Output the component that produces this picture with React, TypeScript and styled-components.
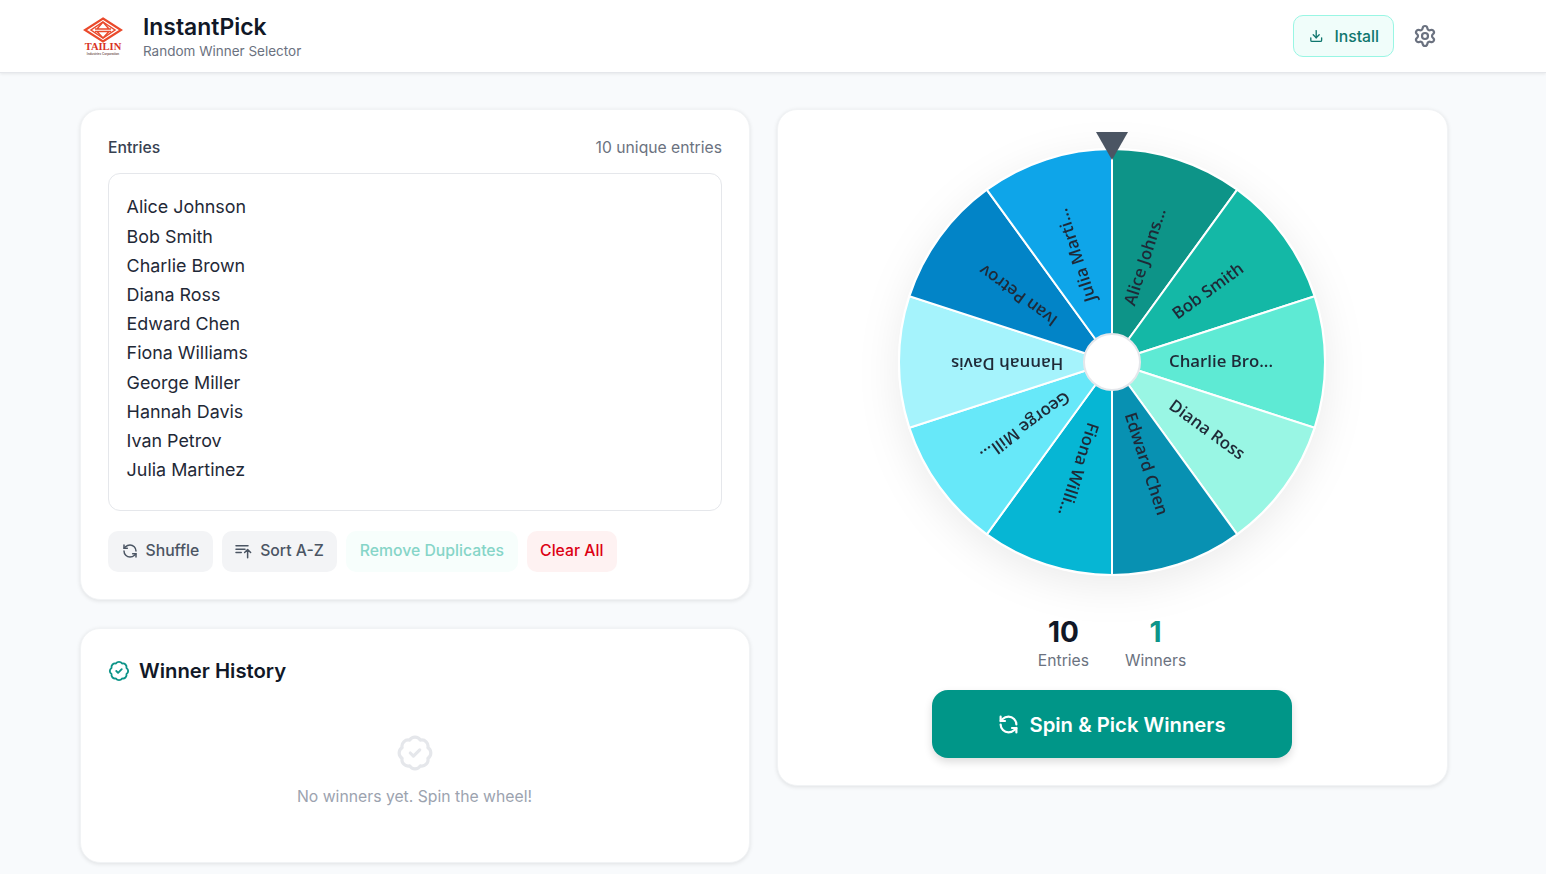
import React from "react";
import styled, { createGlobalStyle } from "styled-components";
import { BadgeCheck, Download, RefreshCcw, Settings } from "lucide-react";

const GlobalStyle = createGlobalStyle`
  * {
    box-sizing: border-box;
  }
  html, body {
    margin: 0;
    height: 874px;
    overflow: hidden;
  }
  body {
    background-color: #f8fafc;
    font-family: Inter, "Liberation Sans", sans-serif;
    color: #111827;
  }
`;

const Header = styled.header`
  height: 73px;
  background-color: #fff;
  border-bottom: 1px solid #e5e7eb;
  box-shadow: 0 1px 3px rgba(0, 0, 0, 0.08);
  display: flex;
  align-items: center;
  justify-content: space-between;
  padding: 0 109px 0 83px;
`;

const Brand = styled.div`
  display: flex;
  align-items: center;
  gap: 20px;
`;

const BrandText = styled.div`
  display: flex;
  flex-direction: column;
  gap: 1px;
`;

const Title = styled.h1`
  margin: 0;
  font-size: 22.9px;
  line-height: 28px;
  font-weight: 600;
  color: #111827;
`;

const Subtitle = styled.p`
  margin: 0;
  font-size: 13.5px;
  line-height: 18px;
  color: #6b7280;
`;

const HeaderActions = styled.div`
  display: flex;
  align-items: center;
  gap: 19px;
`;

const InstallButton = styled.button`
  display: flex;
  align-items: center;
  gap: 11px;
  height: 42px;
  width: 101px;
  padding: 0 14px 0 15px;
  background-color: #f0fdfa;
  border: 1px solid #99f6e4;
  border-radius: 10px;
  color: #0f766e;
  font-family: inherit;
  font-size: 15.75px;
  font-weight: 500;
`;

const IconButton = styled.button`
  display: flex;
  padding: 0;
  border: none;
  background: none;
  color: #6b7280;
`;

const Page = styled.main`
  display: grid;
  grid-template-columns: 670px 671px;
  gap: 27px;
  align-items: start;
  padding: 36px 0 0 80px;
`;

const Column = styled.div`
  display: flex;
  flex-direction: column;
  gap: 28px;
`;

const Card = styled.section`
  background-color: #fff;
  border: 1px solid #f1f3f5;
  border-radius: 20px;
  box-shadow: 0 1px 4px rgba(0, 0, 0, 0.1);
`;

const EntriesCard = styled(Card)`
  height: 491px;
  padding: 27px;
`;

const EntriesHead = styled.div`
  display: flex;
  justify-content: space-between;
  align-items: center;
  height: 20px;
  margin-bottom: 16px;
`;

const EntriesLabel = styled.span`
  font-size: 15.75px;
  font-weight: 500;
  color: #374151;
`;

const EntriesCount = styled.span`
  font-size: 15.7px;
  color: #6b7280;
`;

const EntriesBox = styled.textarea`
  display: block;
  width: 100%;
  height: 338px;
  padding: 18.400px 17.600px 18px;
  border: 1px solid #e5e7eb;
  border-radius: 12px;
  background-color: #fff;
  color: #1f2937;
  font-family: inherit;
  font-size: 17.9px;
  line-height: 29.2px;
  resize: none;
  outline: none;
  overflow: hidden;
`;

const ButtonRow = styled.div`
  display: flex;
  gap: 9px;
  margin-top: 20px;
`;

const ToolButton = styled.button<{ $tone: "gray" | "teal" | "red" }>`
  display: flex;
  align-items: center;
  gap: 8px;
  height: 41px;
  padding: 0 13.5px 2px;
  border: none;
  border-radius: 10px;
  font-family: inherit;
  font-size: 15.75px;
  font-weight: 500;
  background-color: ${(p) =>
    p.$tone === "gray" ? "#f3f4f6" : p.$tone === "teal" ? "#f7fefc" : "#fef2f2"};
  color: ${(p) =>
    p.$tone === "gray" ? "#4b5563" : p.$tone === "teal" ? "#86d5c8" : "#dc0014"};
`;

const HistoryCard = styled(Card)`
  height: 235px;
  padding: 28px 28px 28px 27px;
`;

const HistoryHead = styled.div`
  display: flex;
  align-items: center;
  gap: 9px;
  color: #0d9488;
`;

const HistoryTitle = styled.h2`
  margin: 0;
  font-size: 20.3px;
  line-height: 28px;
  font-weight: 600;
  color: #111827;
`;

const EmptyState = styled.div`
  display: flex;
  flex-direction: column;
  align-items: center;
  gap: 13px;
  margin-top: 49px;
  color: #e5e7eb;
`;

const EmptyText = styled.p`
  margin: 0;
  font-size: 15.75px;
  line-height: 24px;
  color: #9ca3af;
`;

const WheelCard = styled(Card)`
  height: 677px;
  padding: 37px 1px 0 0;
  display: flex;
  flex-direction: column;
  align-items: center;
`;

const WheelWrap = styled.div`
  position: relative;
  width: 430px;
  height: 430px;
`;

const WheelSvg = styled.svg`
  display: block;
  overflow: visible;
  filter: drop-shadow(0 10px 20px rgba(0, 0, 0, 0.08));
`;

const WheelLabel = styled.text`
  font-family: "Open Sans", "Noto Sans", sans-serif;
  font-size: 16.8px;
  font-weight: 600;
  fill: #1f2937;
`;

const Pointer = styled.div`
  position: absolute;
  top: -15px;
  left: 199px;
  width: 32px;
  height: 28px;
  background-color: #4b5563;
  clip-path: polygon(0 0, 100% 0, 50% 100%);
`;

const Stats = styled.div`
  display: flex;
  gap: 36px;
  margin-top: 38px;
`;

const Stat = styled.div`
  display: flex;
  flex-direction: column;
  align-items: center;
  gap: 1px;
`;

const StatValue = styled.span<{ $accent?: boolean }>`
  font-size: 28px;
  line-height: 34px;
  font-weight: 700;
  color: ${(p) => (p.$accent ? "#0d9488" : "#111827")};
`;

const StatLabel = styled.span`
  font-size: 15.7px;
  line-height: 22px;
  color: #6b7280;
`;

const SpinButton = styled.button`
  display: flex;
  align-items: center;
  justify-content: center;
  gap: 10px;
  width: 360px;
  height: 68px;
  margin-top: 18px;
  border: none;
  border-radius: 16px;
  background-color: #009688;
  color: #fff;
  font-family: inherit;
  font-size: 20.3px;
  font-weight: 600;
  box-shadow: 0 4px 8px rgba(0, 0, 0, 0.14);
`;

const entries = [
  "Alice Johnson",
  "Bob Smith",
  "Charlie Brown",
  "Diana Ross",
  "Edward Chen",
  "Fiona Williams",
  "George Miller",
  "Hannah Davis",
  "Ivan Petrov",
  "Julia Martinez",
];

const segments = [
  { label: "Alice Johns...", color: "#0d9488" },
  { label: "Bob Smith", color: "#14b8a6" },
  { label: "Charlie Bro...", color: "#5eead4" },
  { label: "Diana Ross", color: "#99f6e4" },
  { label: "Edward Chen", color: "#0891b2" },
  { label: "Fiona Willi...", color: "#06b6d4" },
  { label: "George Mill...", color: "#67e8f9" },
  { label: "Hannah Davis", color: "#a5f3fc" },
  { label: "Ivan Petrov", color: "#0284c7" },
  { label: "Julia Marti...", color: "#0ea5e9" },
];

const RADIUS = 213;

function pointAt(deg: number) {
  const rad = (deg * Math.PI) / 180;
  return `${(RADIUS * Math.cos(rad)).toFixed(2)} ${(RADIUS * Math.sin(rad)).toFixed(2)}`;
}

function Wheel() {
  return (
    <WheelSvg width="430" height="430" viewBox="-215 -215 430 430">
      <circle r={RADIUS + 1} fill="#fff" />
      {segments.map((seg, i) => {
        const start = -90 + i * 36;
        return (
          <g key={seg.label}>
            <path
              d={`M0 0 L${pointAt(start)} A${RADIUS} ${RADIUS} 0 0 1 ${pointAt(start + 36)} Z`}
              fill={seg.color}
              stroke="#fff"
              strokeWidth="2"
            />
            <WheelLabel
              x="161"
              y="-2"
              textAnchor="end"
              dominantBaseline="central"
              transform={`rotate(${start + 18})`}
            >
              {seg.label}
            </WheelLabel>
          </g>
        );
      })}
      <circle r="28" fill="#fff" stroke="#e5e7eb" strokeWidth="2" />
    </WheelSvg>
  );
}

function SortIcon() {
  return (
    <svg width="17" height="18" viewBox="0 0 22 24" fill="none" stroke="currentColor" strokeWidth="2" strokeLinecap="round" strokeLinejoin="round">
      <path d="M1 5h16M1 9.500h12M1 14h7" />
      <path d="M16.500 21V10M12.500 14l4-4 4 4" />
    </svg>
  );
}

function Logo() {
  return (
    <svg width="40" height="40" viewBox="0 0 40 40" fill="none">
      <g stroke="#ea4a2c">
        <path d="M20 2.500 L38 14 L20 25.500 L2 14 Z" strokeWidth="2.200" />
        <path d="M20 6 L32 14 L20 22 L8 14 Z" strokeWidth="1.500" />
        <path d="M12 13 H28 M12 15.500 H28 M20 6 L14 13 M20 6 L26 13 M20 22 L14 15.500 M20 22 L26 15.500" strokeWidth="1.400" />
      </g>
      <text x="20" y="34" textAnchor="middle" fontFamily="'Liberation Serif', serif" fontWeight="700" fontSize="10.500" fill="#d8321f">
        TAILIN
      </text>
      <text x="20" y="39" textAnchor="middle" fontFamily="'Liberation Sans', sans-serif" fontWeight="700" fontSize="3" fill="#7a5a55">
        Industries Corporation
      </text>
    </svg>
  );
}

export default function App() {
  return (
    <>
      <GlobalStyle />
      <Header>
        <Brand>
          <Logo />
          <BrandText>
            <Title>InstantPick</Title>
            <Subtitle>Random Winner Selector</Subtitle>
          </BrandText>
        </Brand>
        <HeaderActions>
          <InstallButton>
            <Download size={16} strokeWidth={2.2} />
            Install
          </InstallButton>
          <IconButton>
            <Settings size={24} strokeWidth={2.2} />
          </IconButton>
        </HeaderActions>
      </Header>
      <Page>
        <Column>
          <EntriesCard>
            <EntriesHead>
              <EntriesLabel>Entries</EntriesLabel>
              <EntriesCount>10 unique entries</EntriesCount>
            </EntriesHead>
            <EntriesBox defaultValue={entries.join("\n")} spellCheck={false} />
            <ButtonRow>
              <ToolButton $tone="gray">
                <RefreshCcw size={16} strokeWidth={2.2} />
                Shuffle
              </ToolButton>
              <ToolButton $tone="gray">
                <SortIcon />
                Sort A-Z
              </ToolButton>
              <ToolButton $tone="teal">Remove Duplicates</ToolButton>
              <ToolButton $tone="red">Clear All</ToolButton>
            </ButtonRow>
          </EntriesCard>
          <HistoryCard>
            <HistoryHead>
              <BadgeCheck size={22} />
              <HistoryTitle>Winner History</HistoryTitle>
            </HistoryHead>
            <EmptyState>
              <BadgeCheck size={38} />
              <EmptyText>No winners yet. Spin the wheel!</EmptyText>
            </EmptyState>
          </HistoryCard>
        </Column>
        <WheelCard>
          <WheelWrap>
            <Wheel />
            <Pointer />
          </WheelWrap>
          <Stats>
            <Stat>
              <StatValue>10</StatValue>
              <StatLabel>Entries</StatLabel>
            </Stat>
            <Stat>
              <StatValue $accent>1</StatValue>
              <StatLabel>Winners</StatLabel>
            </Stat>
          </Stats>
          <SpinButton>
            <RefreshCcw size={21} strokeWidth={2.5} />
            Spin &amp; Pick Winners
          </SpinButton>
        </WheelCard>
      </Page>
    </>
  );
}
